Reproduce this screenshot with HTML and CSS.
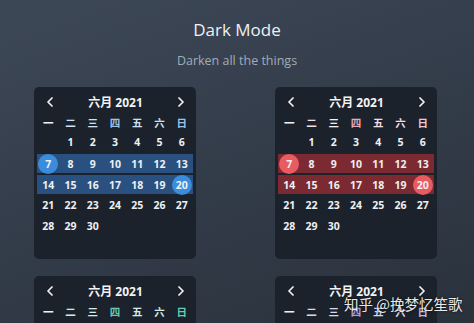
FILE: index.html
```html
<!DOCTYPE html>
<html lang="zh">
<head>
    <meta charset="UTF-8">
    <meta name="viewport" content="width=device-width, initial-scale=1.0">
    <title>Dark Mode</title>
    <link rel="stylesheet" href="styles.css">
</head>
<body>
    <div class="page">
        <h1 class="title">Dark Mode</h1>
        <p class="subtitle">Darken all the things</p>

        <div class="grid">
            <div class="card blue"></div>
            <div class="card red"></div>
            <div class="card teal"></div>
            <div class="card purple"></div>
        </div>
    </div>

    <div class="watermark">知乎 @挽梦忆笙歌</div>

    <script>
        // June 2021, weeks start on Monday
        const weekdays = ['一', '二', '三', '四', '五', '六', '日'];
        const weeks = [
            ['', 1, 2, 3, 4, 5, 6],
            [7, 8, 9, 10, 11, 12, 13],
            [14, 15, 16, 17, 18, 19, 20],
            [21, 22, 23, 24, 25, 26, 27],
            [28, 29, 30, '', '', '', ''],
            ['', '', '', '', '', '', '']
        ];
        const rangeStart = 7;
        const rangeEnd = 20;

        const prevIcon = '<svg width="8" height="10" viewBox="0 0 8 10"><polyline points="6,1 2,5 6,9" fill="none" stroke="#f2f4f6" stroke-width="1.7" stroke-linecap="round" stroke-linejoin="round"/></svg>';
        const nextIcon = '<svg width="8" height="10" viewBox="0 0 8 10"><polyline points="2,1 6,5 2,9" fill="none" stroke="#f2f4f6" stroke-width="1.7" stroke-linecap="round" stroke-linejoin="round"/></svg>';

        function buildCalendar(card) {
            let html = `
                <div class="cal-head">
                    <span class="nav">${prevIcon}</span>
                    <span class="cal-title">六月 2021</span>
                    <span class="nav">${nextIcon}</span>
                </div>
                <div class="weekdays">${weekdays.map(d => `<span>${d}</span>`).join('')}</div>
            `;

            weeks.forEach(week => {
                const inRange = week.some(d => d !== '' && d >= rangeStart && d <= rangeEnd);
                html += `<div class="week${inRange ? ' in-range' : ''}">`;
                week.forEach(d => {
                    const edge = d === rangeStart || d === rangeEnd;
                    html += `<span class="day${edge ? ' edge' : ''}">${d}</span>`;
                });
                html += '</div>';
            });

            card.innerHTML = html;
        }

        document.querySelectorAll('.card').forEach(buildCalendar);
    </script>
</body>
</html>
```

FILE: styles.css
```css
/* Base */
body {
    margin: 0;
    height: 323px;
    overflow: hidden;
    font-family: 'Open Sans', 'Noto Sans CJK SC', sans-serif;
    background: linear-gradient(160deg, #3d4857 0%, #323b48 55%, #2a323c 100%);
    color: #eef1f4;
}

.page {
    padding-top: 18px;
}

.title {
    margin: 0;
    font-size: 17px;
    font-weight: 400;
    line-height: 24px;
    text-align: center;
    color: #eef1f4;
}

.subtitle {
    margin: 10px 0 0;
    font-size: 12.5px;
    line-height: 18px;
    text-align: center;
    color: #a2acb8;
}

/* Calendar cards */
.grid {
    display: grid;
    grid-template-columns: 162px 162px;
    column-gap: 79px;
    row-gap: 17px;
    margin-top: 17px;
    padding-left: 34px;
}

.card {
    height: 172px;
    box-sizing: border-box;
    padding: 5px 3px 1px;
    border-radius: 5px;
    background: #1c222b;
}

.cal-head {
    display: flex;
    justify-content: space-between;
    align-items: center;
    height: 20px;
    padding: 0 8px 0 9px;
}

.nav {
    display: flex;
}

.cal-title {
    font-size: 12px;
    font-weight: 700;
    color: #f2f4f6;
}

.weekdays, .week {
    display: grid;
    grid-template-columns: repeat(7, 1fr);
    align-items: center;
    text-align: center;
}

.weekdays {
    height: 20px;
    font-family: 'Noto Sans CJK SC', sans-serif;
    font-size: 10.5px;
    font-weight: 700;
}

.week {
    height: 21px;
    box-sizing: border-box;
    padding: 1px 0;
    background-clip: content-box;
}

.week.in-range {
    background-color: var(--band);
}

.day {
    font-size: 10.5px;
    font-weight: 700;
    line-height: 19px;
    color: #eef0f3;
}

.day.edge {
    justify-self: center;
    width: 20px;
    height: 20px;
    line-height: 20px;
    border-radius: 50%;
    background: var(--dot);
}

/* Themes */
.blue { --band: #29507f; --dot: #3b8ddb; }
.red { --band: #7a2a30; --dot: #e85b60; }
.teal { --band: #1e5a50; --dot: #3fbf9f; }
.purple { --band: #46306e; --dot: #9b7ee0; }

.blue .weekdays span { color: #cfe0f2; }
.blue .weekdays span:nth-child(1) { color: #eef2f6; }
.blue .weekdays span:nth-child(4),
.blue .weekdays span:nth-child(7) { color: #9cc3ea; }

.red .weekdays span { color: #f2dde0; }
.red .weekdays span:nth-child(1),
.red .weekdays span:nth-child(3) { color: #f2f2f4; }
.red .weekdays span:nth-child(4) { color: #e6aab8; }
.red .weekdays span:nth-child(7) { color: #f0c8d2; }

.teal .weekdays span { color: #d2ece6; }
.teal .weekdays span:nth-child(1) { color: #e8f4f0; }
.teal .weekdays span:nth-child(4),
.teal .weekdays span:nth-child(7) { color: #66ccb2; }

.purple .weekdays span { color: #dcd6f0; }
.purple .weekdays span:nth-child(1) { color: #eeeef4; }
.purple .weekdays span:nth-child(4) { color: #b49be0; }
.purple .weekdays span:nth-child(7) { color: #c8b8f0; }

/* Watermark over the last card */
.watermark {
    position: absolute;
    left: 344px;
    top: 293px;
    font-family: 'Noto Sans CJK SC', sans-serif;
    font-size: 14.5px;
    color: rgba(255, 255, 255, 0.92);
    text-shadow: 0 0 3px rgba(0, 0, 0, 0.7);
    white-space: nowrap;
}
```
